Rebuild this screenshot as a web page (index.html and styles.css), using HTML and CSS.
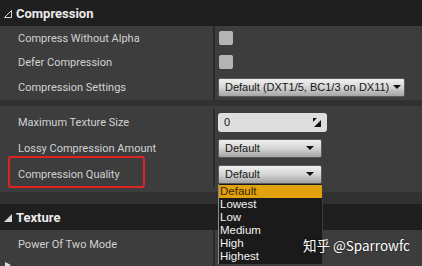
FILE: index.html
```html
<!DOCTYPE html>
<html lang="en">
  <head>
    <meta charset="UTF-8" />
    <title>Details - Compression</title>
    <link rel="stylesheet" href="styles.css">
  </head>
  <body>
    <div class="panel">
      <div class="cat">
        <svg class="tri" width="8" height="8" viewBox="0 0 8 8"><path d="M7.5 0.5 L7.5 7.5 L0.5 7.5 Z" fill="none" stroke="#d8d8d8" stroke-width="1"/></svg>
        <span>Compression</span>
      </div>
      <div class="group first">
        <div class="row short">
          <div class="label">Compress Without Alpha</div>
          <div class="value"><span class="check"></span></div>
        </div>
        <div class="row short">
          <div class="label">Defer Compression</div>
          <div class="value"><span class="check"></span></div>
        </div>
        <div class="row">
          <div class="label">Compression Settings</div>
          <div class="value">
            <div class="combo wide">Default (DXT1/5, BC1/3 on DX11)<span class="arrow"></span></div>
          </div>
        </div>
      </div>
      <div class="group second">
        <div class="row">
          <div class="label">Maximum Texture Size</div>
          <div class="value">
            <div class="spin">0
              <svg width="8" height="9" viewBox="0 0 8 9"><path d="M0 0 L4 0 L0 4 Z M8 2 L8 9 L1 9 Z" fill="#111"/></svg>
            </div>
          </div>
        </div>
        <div class="row">
          <div class="label">Lossy Compression Amount</div>
          <div class="value"><div class="combo">Default<span class="arrow"></span></div></div>
        </div>
        <div class="row">
          <div class="label">Compression Quality</div>
          <div class="value"><div class="combo">Default<span class="arrow"></span></div></div>
        </div>
      </div>
      <div class="cat">
        <svg class="tri" width="8" height="8" viewBox="0 0 8 8"><path d="M8 0 L8 8 L0 8 Z" fill="#d8d8d8"/></svg>
        <span>Texture</span>
      </div>
      <div class="group last">
        <div class="row tall">
          <div class="label">Power Of Two Mode</div>
          <div class="value"></div>
        </div>
        <div class="row stub">
          <div class="label sub"><svg width="6" height="6" viewBox="0 0 6 6"><path d="M0 0 L6 3 L0 6 Z" fill="#e0e0e0"/></svg></div>
          <div class="value"></div>
        </div>
      </div>
    </div>

    <!-- annotation over the label -->
    <div class="mark"></div>

    <ul class="menu">
      <li class="active">Default</li>
      <li>Lowest</li>
      <li>Low</li>
      <li>Medium</li>
      <li>High</li>
      <li>Highest</li>
    </ul>

    <div class="watermark">知乎 @Sparrowfc</div>
  </body>
</html>
```

FILE: styles.css
```css
/* Unreal details panel look */
body {
  margin: 0;
  background-color: #313131;
  font-family: "Roboto", "Liberation Sans", sans-serif;
  overflow: hidden;
}
.panel {
  width: 422px;
  height: 266px;
  overflow: hidden;
}
.cat {
  height: 26px;
  display: flex;
  align-items: center;
  background-color: #1f1f1f;
  color: #ebebeb;
  font-weight: bold;
  font-size: 13px;
  padding-left: 4px;
}
.tri {
  margin-right: 4px;
  margin-top: 2px;
}
.group {
  background-color: #3d3d3d;
}
.group.first {
  margin-bottom: 6px;
}
.group.second {
  padding: 3px 0 5px;
  margin-bottom: 12px;
}
.row {
  display: grid;
  grid-template-columns: 213px 1fr;
  height: 26px;
}
.row.short {
  height: 24px;
}
.row.tall {
  height: 28px;
}
.row.stub {
  height: 8px;
}
.label {
  display: flex;
  align-items: center;
  padding-left: 18px;
  color: #d2d2d2;
  font-size: 11px;
}
.label.sub {
  padding-left: 5px;
  align-items: flex-start;
  padding-top: 4px;
}
.value {
  display: flex;
  align-items: center;
  border-left: 2px solid #2b2b2b;
  padding-left: 3px;
}
.check {
  width: 14px;
  height: 14px;
  margin-left: 1px;
  border-radius: 2px;
  background-color: #b4b4b4;
}
.combo {
  width: 104px;
  height: 19px;
  box-sizing: border-box;
  display: flex;
  align-items: center;
  padding-left: 6px;
  border: 1px solid #5a5a5a;
  border-radius: 2px;
  background: linear-gradient(#f0f0f0, #d8d8d8 45%, #a4a4a4);
  color: #151515;
  font-family: "Liberation Sans", sans-serif;
  font-size: 11px;
}
.combo .arrow {
  margin-left: auto;
  margin-right: 7px;
  border-left: 4px solid transparent;
  border-right: 4px solid transparent;
  border-top: 4px solid #111;
}
.combo.wide {
  width: 187px;
}
.combo.wide .arrow {
  margin-left: 4px;
  margin-right: 0;
}
.spin {
  width: 109px;
  height: 19px;
  box-sizing: border-box;
  display: flex;
  align-items: center;
  justify-content: space-between;
  padding: 0 6px 0 6px;
  border-radius: 3px;
  background-color: #dedede;
  color: #151515;
  font-family: "Liberation Sans", sans-serif;
  font-size: 11px;
}
.mark {
  position: absolute;
  left: 8px;
  top: 156px;
  width: 133px;
  height: 28px;
  border: 2px solid #e02424;
  border-radius: 3px;
}
.menu {
  position: absolute;
  left: 218px;
  top: 184px;
  width: 103px;
  margin: 0;
  padding: 1px 0 1px;
  list-style: none;
  background-color: #1a1a1a;
  border-left: 1px solid #8a8a8a;
  border-right: 1px solid #3a3a3a;
  font-family: "Liberation Sans", sans-serif;
  font-size: 11.5px;
}
.menu li {
  height: 13px;
  line-height: 13px;
  padding-left: 1px;
  color: #f2f2f2;
}
.menu li.active {
  background-color: #e2a10f;
  color: #3a2600;
}
.watermark {
  position: absolute;
  left: 303px;
  top: 235px;
  color: #fff;
  font-family: "Noto Sans CJK SC", "Noto Sans", sans-serif;
  font-size: 13.5px;
  text-shadow: 0 0 2px rgba(0, 0, 0, 0.6);
}
```
